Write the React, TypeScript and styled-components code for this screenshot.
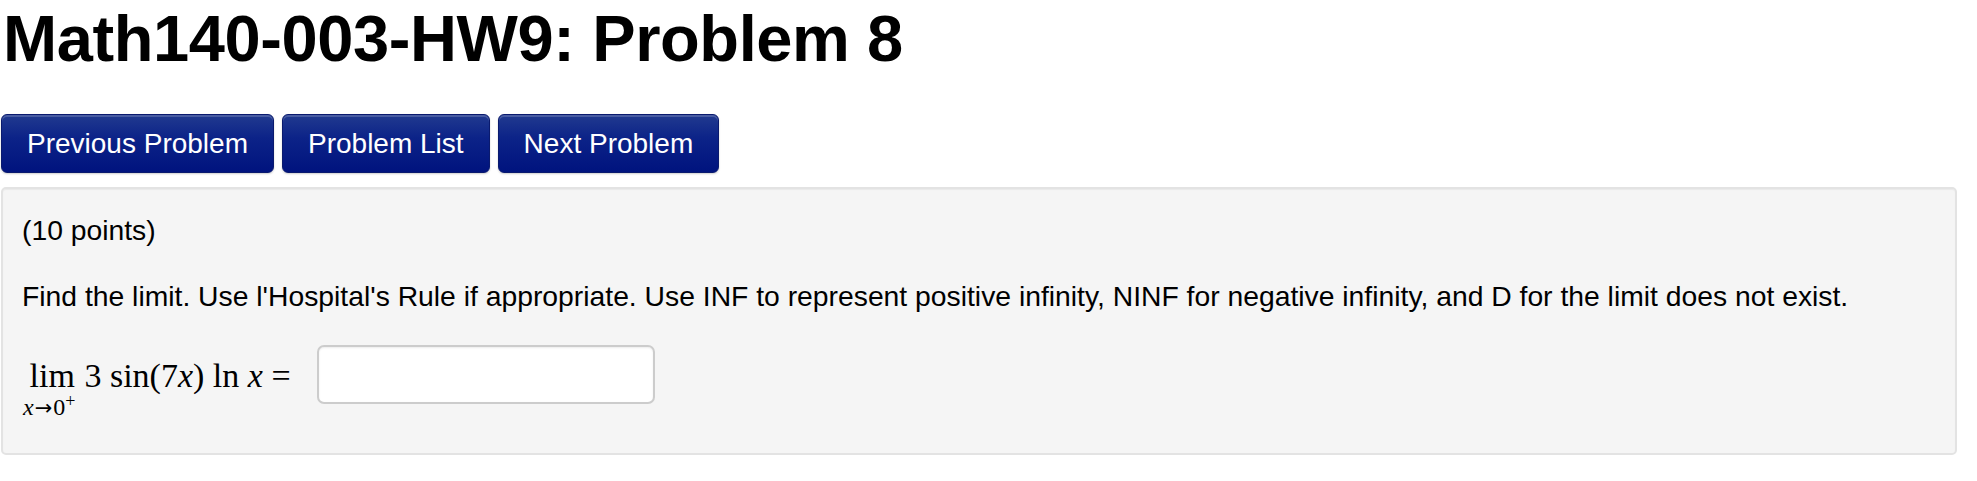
import styled, { createGlobalStyle } from "styled-components";

const GlobalStyle = createGlobalStyle`
    html, body {
        margin: 0;
        padding: 0;
        background: #ffffff;
    }
    body {
        font-family: "Liberation Sans", Arial, Helvetica, sans-serif;
        color: #000000;
    }
`;

const Page = styled.div`
    width: 1956px;
    padding: 0 0 0 1px;
`;

const Title = styled.h1`
    font-size: 65px;
    font-weight: bold;
    line-height: 72px;
    margin: 0 0 0 2px;
    padding-top: 3px;
    letter-spacing: -0.4px;
`;

const NavBar = styled.div`
    display: flex;
    gap: 8px;
    margin-top: 39px;
`;

const NavButton = styled.button`
    height: 59px;
    padding: 0 25px;
    font-family: "Liberation Sans", Arial, Helvetica, sans-serif;
    font-size: 28px;
    color: #ffffff;
    border: 1px solid #0a1a6e;
    border-radius: 6px;
    background: linear-gradient(to bottom, #213a8f 0%, #0c2388 40%, #00137e 100%);
    box-shadow: inset 0 2px 0 rgba(255, 255, 255, 0.18), 0 1px 2px rgba(0, 0, 0, 0.2);
    cursor: pointer;
`;

const Well = styled.div`
    margin-top: 14px;
    height: 268px;
    box-sizing: border-box;
    padding: 25px 19px 18px;
    background: #f5f5f5;
    border: 2px solid #e3e3e3;
    border-radius: 5px;
    box-shadow: inset 0 1px 1px rgba(0, 0, 0, 0.05);
    font-size: 28.3px;
`;

const Para = styled.p`
    margin: 0 0 34px 0;
    line-height: 32px;
`;

const AnswerRow = styled.div`
    display: flex;
    align-items: flex-start;
    gap: 26px;
    margin-top: 8px;
`;

const MathExpr = styled.div`
    display: flex;
    align-items: flex-start;
    font-family: "Liberation Serif", "Times New Roman", serif;
    font-size: 34px;
    padding: 12px 0 0 7px;
`;

const Limit = styled.span`
    display: inline-flex;
    flex-direction: column;
    align-items: center;
    margin-right: 9px;
`;

const LimWord = styled.span`
    line-height: 36px;
`;

const LimSub = styled.span`
    display: block;
    font-size: 24px;
    line-height: 26px;
    margin-left: -6px;
    white-space: nowrap;
`;

const Arrow = styled.span`
    font-family: "DejaVu Sans", sans-serif;
    font-size: 21px;
    margin: 0 1px;
`;

const Sup = styled.sup`
    font-size: 18px;
    vertical-align: 8px;
    line-height: 0;
`;

const Body = styled.span`
    line-height: 36px;
    white-space: pre;
`;

const Var = styled.i`
    font-style: italic;
`;

const AnswerInput = styled.input`
    width: 338px;
    height: 59px;
    box-sizing: border-box;
    margin-top: -1px;
    border: 2px solid #cccccc;
    border-radius: 7px;
    background: #ffffff;
    box-shadow: inset 0 1px 2px rgba(0, 0, 0, 0.08);
    font-size: 26px;
    padding: 0 10px;
    outline: none;
`;

export default function App() {
    return (
        <Page>
            <GlobalStyle />
            <Title>Math140-003-HW9: Problem 8</Title>
            <NavBar>
                <NavButton>Previous Problem</NavButton>
                <NavButton>Problem List</NavButton>
                <NavButton>Next Problem</NavButton>
            </NavBar>
            <Well>
                <Para>(10 points)</Para>
                <Para>
                    Find the limit. Use l'Hospital's Rule if appropriate. Use INF to represent positive infinity, NINF for negative infinity, and D for the limit does not exist.
                </Para>
                <AnswerRow>
                    <MathExpr>
                        <Limit>
                            <LimWord>lim</LimWord>
                            <LimSub>
                                <Var>x</Var>
                                <Arrow>→</Arrow>0<Sup>+</Sup>
                            </LimSub>
                        </Limit>
                        <Body>
                            3 sin(7<Var>x</Var>) ln <Var>x</Var> =
                        </Body>
                    </MathExpr>
                    <AnswerInput type="text" />
                </AnswerRow>
            </Well>
        </Page>
    );
}
